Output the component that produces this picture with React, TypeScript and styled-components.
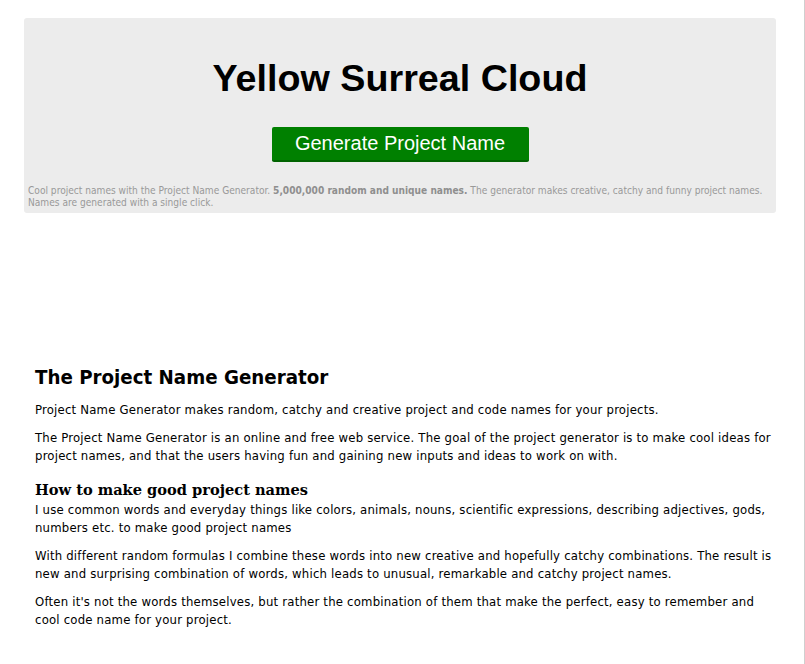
import styled, { createGlobalStyle } from "styled-components";

const GlobalStyle = createGlobalStyle`
  body {
    margin: 0;
    background: #ffffff;
    font-family: "DejaVu Sans Condensed", "DejaVu Sans", sans-serif;
  }
`;

function App() {
  return (
    <Page>
      <GlobalStyle />
      <Hero>
        <Title>Yellow Surreal Cloud</Title>
        <GenerateButton>Generate Project Name</GenerateButton>
        <Tagline>
          Cool project names with the Project Name Generator.{" "}
          <strong>5,000,000 random and unique names.</strong> The generator
          makes creative, catchy and funny project names. Names are generated
          with a single click.
        </Tagline>
      </Hero>

      <AdSlot />

      <Content>
        <Heading>The Project Name Generator</Heading>
        <Text>
          Project Name Generator makes random, catchy and creative project and
          code names for your projects.
        </Text>
        <Text>
          The Project Name Generator is an online and free web service. The goal
          of the project generator is to make cool ideas for project names, and
          that the users having fun and gaining new inputs and ideas to work on
          with.
        </Text>

        <SubHeading>How to make good project names</SubHeading>
        <Text>
          I use common words and everyday things like colors, animals, nouns,
          scientific expressions, describing adjectives, gods, numbers etc. to
          make good project names
        </Text>
        <Text>
          With different random formulas I combine these words into new creative
          and hopefully catchy combinations. The result is new and surprising
          combination of words, which leads to unusual, remarkable and catchy
          project names.
        </Text>
        <Text>
          Often it's not the words themselves, but rather the combination of
          them that make the perfect, easy to remember and cool code name for
          your project.
        </Text>
      </Content>
    </Page>
  );
}

export default App;

const Page = styled.div`
  box-sizing: border-box;
  width: 805px;
  min-height: 664px;
  padding-top: 18px;
  border-right: 1px solid #cfcfcf;
`;

const Hero = styled.div`
  box-sizing: border-box;
  width: 752px;
  height: 195px;
  margin-left: 24px;
  padding: 38px 4px 0 4px;
  background: #ececec;
  border-radius: 3px;
  display: flex;
  flex-direction: column;
  align-items: center;
`;

const Title = styled.h1`
  margin: 0;
  font-family: "Liberation Sans", Arial, sans-serif;
  font-size: 37.7px;
  line-height: 44px;
  font-weight: 700;
  color: #000000;
`;

const GenerateButton = styled.button`
  box-sizing: border-box;
  width: 257px;
  height: 35px;
  margin-top: 27px;
  padding: 0 0 2px 0;
  border: none;
  border-bottom: 2px solid #006300;
  border-radius: 2px;
  background: #008000;
  color: #ffffff;
  font-family: "Liberation Sans", Arial, sans-serif;
  font-size: 20px;
  line-height: 33px;
  cursor: pointer;
`;

const Tagline = styled.p`
  align-self: stretch;
  margin: 23px 0 0 0;
  font-size: 10.1px;
  line-height: 12px;
  color: #999999;

  strong {
    font-weight: 700;
    color: #8f8f8f;
  }
`;

const AdSlot = styled.div`
  height: 152px;
`;

const Content = styled.div`
  padding: 0 30px 0 35px;
  color: #000000;
`;

const Heading = styled.h2`
  margin: 0 0 12px 0;
  font-size: 20.3px;
  line-height: 24px;
  font-weight: 700;
`;

const SubHeading = styled.h3`
  margin: 14px 0 0 0;
  font-family: "DejaVu Serif", Georgia, serif;
  font-size: 14.6px;
  line-height: 22px;
  font-weight: 700;
`;

const Text = styled.p`
  margin: 0 0 10px 0;
  font-size: 13px;
  line-height: 18px;
  letter-spacing: 0.2px;
`;
